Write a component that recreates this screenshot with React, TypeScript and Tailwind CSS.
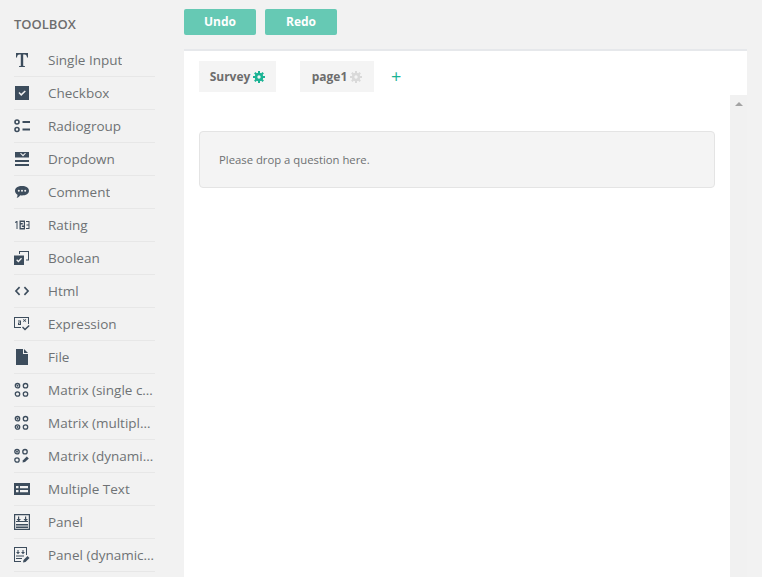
import { ReactNode } from 'react';

const INK = '#3d4d5d';

function Svg({ children }: { children: ReactNode }) {
  return (
    <svg width="16" height="16" viewBox="0 0 16 16" fill={INK} className="block overflow-visible">
      {children}
    </svg>
  );
}

const icons: Record<string, ReactNode> = {
  text: (
    <Svg>
      <path d="M2 1h12v4.500h-1c-.2-2-.8-3-2.500-3H9.200v10.800c0 .6.500.9 1.800.9v.8H5v-.8c1.300 0 1.800-.3 1.800-.9V2.500H5.500C3.800 2.500 3.200 3.500 3 5.500H2z" />
    </Svg>
  ),
  checkbox: (
    <Svg>
      <path fillRule="evenodd" d="M1 1h14v14H1zM4.500 8l1-1 1.700 1.700L10.800 5.500l1 1-4.600 4.400z" />
    </Svg>
  ),
  radio: (
    <Svg>
      <circle cx="3" cy="4" r="2" fill="none" stroke={INK} strokeWidth="1.600" />
      <circle cx="3" cy="11.500" r="2" fill="none" stroke={INK} strokeWidth="1.600" />
      <rect x="8.500" y="3" width="7.500" height="2" />
      <rect x="8.500" y="10.500" width="7.500" height="2" />
    </Svg>
  ),
  dropdown: (
    <Svg>
      <path fillRule="evenodd" d="M1 1h14v5.500H1zM6 2.200l3 3.200 3-3.200-1-.2-2 1.800L7 2z" />
      <rect x="1" y="9" width="14" height="2" />
      <rect x="1" y="13" width="14" height="2" />
    </Svg>
  ),
  comment: (
    <Svg>
      <path
        fillRule="evenodd"
        d="M8 2c4 0 7 1.900 7 4.800s-3 4.700-7 4.700c-.7 0-1.200 0-1.800-.2C5 13 3.500 14 2.500 14c.7-.8 1.100-2 1-3.300C2 9.800 1 8.500 1 6.800 1 3.900 4 2 8 2zM4.800 5.800a1 1 0 1 0 0 2 1 1 0 0 0 0-2zM8 5.800a1 1 0 1 0 0 2 1 1 0 0 0 0-2zM11.200 5.800a1 1 0 1 0 0 2 1 1 0 0 0 0-2z"
      />
    </Svg>
  ),
  rating: (
    <Svg>
      <path d="M1 5 2.500 4h1v8h-1V5.400L1.300 6z" />
      <path fillRule="evenodd" d="M5.500 3.500h5.500v9H5.500zM6.800 5v1h2v1.500h-2V11h3v-1h-2V8.500h2V5z" />
      <path d="M12 4h3.500v8H12v-1h2.500V8.500H12.500v-1h2V5H12z" />
    </Svg>
  ),
  boolean: (
    <Svg>
      <path d="M5 1h10v9.500h-3v-1h2V2H6v2H5z" />
      <path fillRule="evenodd" d="M0 5.500h10v9.500H0zM2.200 10.200l.9-.9 1.300 1.300 2.700-2.800.9.900-3.600 3.700z" />
    </Svg>
  ),
  html: (
    <Svg>
      <path d="M5 3.500 6.200 4.700 3 8l3.200 3.300L5 12.500 .8 8zM11 3.500 9.800 4.700 13 8l-3.200 3.300 1.200 1.200L15.200 8z" />
    </Svg>
  ),
  expression: (
    <Svg>
      <path d="M0 1h15v7h-1V2H1v9h6v1H0z" />
      <path d="M4 4.500h3v4.500H4V6.400h2V5.500H4zM5 7.300V8h1v-.7z" />
      <path d="M9 3.500l.6-.5 1 1 1-1 .6.500-1 1 1 1-.6.500-1-1-1 1-.6-.5 1-1z" />
      <path d="M8 11.500l1-1 2 2 3.700-3.500 1 1-4.700 4.500z" />
    </Svg>
  ),
  file: (
    <Svg>
      <path d="M2 0h7v5h5v11H2zM10 0l4 4h-4z" />
    </Svg>
  ),
  matrixSingle: (
    <Svg>
      <g fill="none" stroke={INK} strokeWidth="1.300">
        <circle cx="3.500" cy="3.700" r="2.200" />
        <circle cx="11.500" cy="3.700" r="2.200" />
        <circle cx="3.500" cy="12" r="2.200" />
        <circle cx="11.500" cy="12" r="2.200" />
      </g>
      <circle cx="3.500" cy="3.700" r="1" />
    </Svg>
  ),
  matrixMultiple: (
    <Svg>
      <g fill="none" stroke={INK} strokeWidth="1.300">
        <circle cx="3.500" cy="3.700" r="2.200" />
        <circle cx="11.500" cy="3.700" r="2.200" />
        <circle cx="3.500" cy="12" r="2.200" />
        <circle cx="11.500" cy="12" r="2.200" />
      </g>
      <circle cx="3.500" cy="3.700" r="1" />
      <circle cx="3.500" cy="12" r="1" />
    </Svg>
  ),
  matrixDynamic: (
    <Svg>
      <g fill="none" stroke={INK} strokeWidth="1.300">
        <circle cx="3" cy="3.700" r="2.200" />
        <circle cx="11" cy="3.700" r="2.200" />
        <circle cx="3" cy="12" r="2.200" />
      </g>
      <circle cx="3" cy="3.700" r="1" />
      <path d="M8.500 14.500l.5-2.200 3.800-3.800 2 2-3.800 3.500z" />
    </Svg>
  ),
  multipleText: (
    <Svg>
      <path fillRule="evenodd" d="M0 2h16v12H0zM2 5v2.200h2.500V5zM6 5v2.200h8V5zM2 9v2.200h2.500V9zM6 9v2.200h8V9z" />
    </Svg>
  ),
  panel: (
    <Svg>
      <path fillRule="evenodd" d="M0 0h16v16H0zM1.200 1.200v13.600h13.600V1.200z" />
      <path d="M4 2.500h1.200V5H7L4.600 7.500 2.500 5H4zM11 2.500h1.200V5H14l-2.400 2.500L9.500 5H11z" />
      <rect x="2" y="7" width="12" height="1" />
      <rect x="2" y="10" width="12" height="1.500" />
      <rect x="2" y="12.500" width="12" height="1.500" />
    </Svg>
  ),
  panelDynamic: (
    <Svg>
      <path d="M0 0h13v8h-1V1H1v13h6v1H0z" />
      <path d="M3.500 3h1v2h1.500L4 7.200 2 5h1.500zM8.500 3h1v2H11L9 7.200 7 5h1.500z" />
      <rect x="2" y="8.500" width="8" height="1" />
      <rect x="2" y="11" width="6" height="1" />
      <path d="M9 15.500l.5-2.500 4-4 2 2-4 4z" />
    </Svg>
  ),
};

const tools = [
  { name: 'Single Input', icon: 'text' },
  { name: 'Checkbox', icon: 'checkbox' },
  { name: 'Radiogroup', icon: 'radio' },
  { name: 'Dropdown', icon: 'dropdown' },
  { name: 'Comment', icon: 'comment' },
  { name: 'Rating', icon: 'rating' },
  { name: 'Boolean', icon: 'boolean' },
  { name: 'Html', icon: 'html' },
  { name: 'Expression', icon: 'expression' },
  { name: 'File', icon: 'file' },
  { name: 'Matrix (single choice)', icon: 'matrixSingle' },
  { name: 'Matrix (multiple choice)', icon: 'matrixMultiple' },
  { name: 'Matrix (dynamic rows)', icon: 'matrixDynamic' },
  { name: 'Multiple Text', icon: 'multipleText' },
  { name: 'Panel', icon: 'panel' },
  { name: 'Panel (dynamic panel)', icon: 'panelDynamic' },
];

function Gear({ color }: { color: string }) {
  return (
    <svg width="12" height="12" viewBox="0 0 12 12" className="block">
      <circle cx="6" cy="6" r="3" fill="none" stroke={color} strokeWidth="2.600" />
      <path
        stroke={color}
        strokeWidth="2"
        d="M6 0v2.500M6 9.500V12M0 6h2.500M9.500 6H12M1.800 1.800l1.700 1.700M8.500 8.500l1.700 1.700M1.800 10.200l1.700-1.700M8.500 3.500l1.700-1.700"
      />
    </svg>
  );
}

export default function App() {
  return (
    <div className="flex h-[577px] w-[762px] overflow-hidden bg-[#f2f2f2] font-['Open_Sans',sans-serif] text-[#6d7072]">
      <aside className="w-[184px] shrink-0 pl-[14px] pr-[29px] pt-[16px]">
        <h3 className="mb-[11px] text-[13px] leading-[17px] font-semibold text-[#6d6d6d]">TOOLBOX</h3>
        {tools.map(tool => (
          <div key={tool.name} className="flex h-[33px] items-center border-b border-[#e7e7e7]">
            <span className="w-[34px] shrink-0">{icons[tool.icon]}</span>
            <span className="truncate text-[13.5px] text-[#6f7275]">{tool.name}</span>
          </div>
        ))}
      </aside>

      <main className="flex min-w-0 flex-1 flex-col pr-[15px] pt-[9px]">
        <div className="flex gap-[9px]">
          <button className="h-[26px] w-[72px] rounded-[2px] bg-[#66c9b4] text-[12px] font-bold text-white">Undo</button>
          <button className="h-[26px] w-[72px] rounded-[2px] bg-[#66c9b4] text-[12px] font-bold text-white">Redo</button>
        </div>

        <section className="mt-[14px] flex min-h-0 flex-1 flex-col border-t-2 border-[#e6e8eb] bg-white">
          <div className="flex h-[44px] shrink-0 items-start pl-[15px] pt-[10px]">
            <div className="flex h-[31px] w-[77px] items-center justify-center gap-[3px] bg-[#f4f4f4] text-[12px] font-bold text-[#6d6d6d]">
              Survey
              <Gear color="#1ab394" />
            </div>
            <div className="ml-[24px] flex h-[31px] w-[74px] items-center justify-center gap-[3px] bg-[#f4f4f4] text-[12px] font-bold text-[#6d6d6d]">
              page1
              <Gear color="#d9d9d9" />
            </div>
            <span className="ml-[17px] mt-[5px] text-[18px] leading-[20px] font-normal text-[#1ab394]">+</span>
          </div>

          <div className="flex min-h-0 flex-1">
            <div className="flex-1 pl-[15px] pr-[15px] pt-[36px]">
              <div className="flex h-[57px] items-center rounded-[4px] border border-[#e4e4e4] bg-[#f4f4f4] pl-[19px] text-[11.3px] text-[#6d7072]">
                <span className="translate-y-px">Please drop a question here.</span>
              </div>
            </div>
            <div className="flex w-[17px] shrink-0 justify-center bg-[#f1f1f1] pt-[7px]">
              <span className="h-0 w-0 border-x-[4px] border-b-[4px] border-x-transparent border-b-[#a3a3a3]" />
            </div>
          </div>
        </section>
      </main>
    </div>
  );
}
